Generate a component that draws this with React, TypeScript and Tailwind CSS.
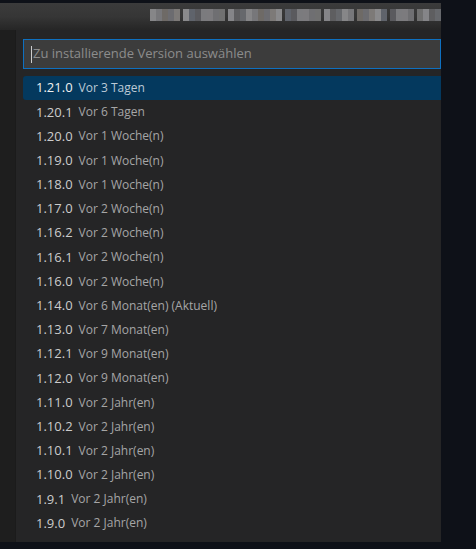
import React from "react";

const rows: [string, string][] = [
  ["1.21.0", "Vor 3 Tagen"],
  ["1.20.1", "Vor 6 Tagen"],
  ["1.20.0", "Vor 1 Woche(n)"],
  ["1.19.0", "Vor 1 Woche(n)"],
  ["1.18.0", "Vor 1 Woche(n)"],
  ["1.17.0", "Vor 2 Woche(n)"],
  ["1.16.2", "Vor 2 Woche(n)"],
  ["1.16.1", "Vor 2 Woche(n)"],
  ["1.16.0", "Vor 2 Woche(n)"],
  ["1.14.0", "Vor 6 Monat(en) (Aktuell)"],
  ["1.13.0", "Vor 7 Monat(en)"],
  ["1.12.1", "Vor 9 Monat(en)"],
  ["1.12.0", "Vor 9 Monat(en)"],
  ["1.11.0", "Vor 2 Jahr(en)"],
  ["1.10.2", "Vor 2 Jahr(en)"],
  ["1.10.1", "Vor 2 Jahr(en)"],
  ["1.10.0", "Vor 2 Jahr(en)"],
  ["1.9.1", "Vor 2 Jahr(en)"],
  ["1.9.0", "Vor 2 Jahr(en)"],
];

const shades = ["#5f636b", "#7d7a78", "#6e6a66", "#868688", "#5e5e60", "#707070", "#7c7b7e", "#5a5a5e", "#8a8a8c", "#6c6c70", "#77777a", "#66686c", "#858588", "#6f6f72", "#7b7b7e"];
const words = [5, 1, 7, 1, 9, 1, 6, 1, 5, 1, 5, 1, 4, 1, 6];
const mosaic: { w: number; c: string }[] = [];
let k = 0;
words.forEach((n, wi) => {
  if (wi % 2 === 1) {
    mosaic.push({ w: 3, c: "transparent" });
  } else {
    for (let j = 0; j < n; j++) {
      mosaic.push({ w: 6, c: shades[(k * 7 + 3) % shades.length] });
      k++;
    }
  }
});

export default function App() {
  return (
    <div
      className="w-[476px] h-[549px] bg-[#0e1118] flex flex-col pt-[3px] overflow-hidden"
      style={{ fontFamily: '"Open Sans", "Noto Sans", sans-serif' }}
    >
      <div className="flex-1 flex flex-col w-[441px] min-h-0">
        <div className="h-[27px] shrink-0 bg-gradient-to-b from-[#3b3b3b] via-[#363636] to-[#262626] flex items-start pl-[150px] pt-[6px] overflow-hidden">
          <div className="flex h-[12px] blur-[0.3px] shrink-0">
            {mosaic.map((m, i) => (
              <div key={i} style={{ width: m.w, background: m.c }} className="h-full shrink-0" />
            ))}
          </div>
        </div>
        <div className="flex flex-1 min-h-0">
          <div className="w-[15px] bg-[#1e1e1e] shrink-0" />
          <div className="flex-1 bg-[#252526] pl-[7px] pt-[9px] pb-[7px] flex flex-col min-w-0 border-l border-[#1b1b1b]">
            <div className="h-[30px] shrink-0 bg-[#3c3c3c] border border-[#0e70c0] flex items-center pl-[7px] text-[13px] text-[#8c8c8c] whitespace-nowrap overflow-hidden">
              <span className="w-px h-[17px] bg-[#cccccc] mr-px" />
              Zu installierende Version auswählen
            </div>
            <div className="mt-[7px] flex flex-col">
              {rows.map(([v, d], i) => (
                <div
                  key={v}
                  className={
                    "h-[24.2px] flex items-center pl-[13px] gap-[6px] whitespace-nowrap " +
                    (i === 0 ? "bg-[#04395e] rounded-l-[3px]" : "")
                  }
                >
                  <span className={"text-[13px] " + (i === 0 ? "text-[#f0f0f0]" : "text-[#cccccc]")}>{v}</span>
                  <span className={"text-[12px] " + (i === 0 ? "text-[#bccad6]" : "text-[#a6a6a6]")}>{d}</span>
                </div>
              ))}
            </div>
          </div>
        </div>
      </div>
      <div className="h-[7px] shrink-0" />
    </div>
  );
}
